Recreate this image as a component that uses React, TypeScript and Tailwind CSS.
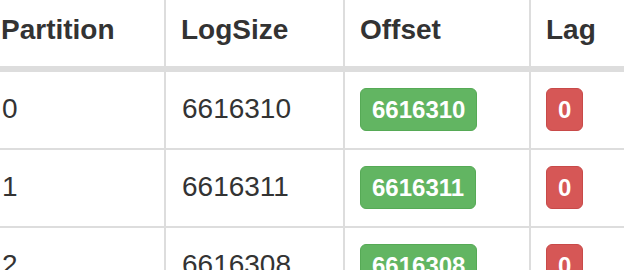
const rows = [
  { partition: 0, logSize: 6616310, offset: 6616310, lag: 0 },
  { partition: 1, logSize: 6616311, offset: 6616311, lag: 0 },
  { partition: 2, logSize: 6616308, offset: 6616308, lag: 0 },
]

const Badge = ({ value, tone }: { value: number; tone: "green" | "red" }) => (
  <span
    className={
      tone === "green"
        ? "inline-block rounded-[6px] border border-[#56aa56] bg-[#62b562] px-[11px] py-[4px] text-[24px] font-bold leading-[33px] text-white"
        : "inline-block rounded-[6px] border border-[#c84a49] bg-[#d65756] px-[11px] py-[4px] text-[24px] font-bold leading-[33px] text-white"
    }
  >
    {value}
  </span>
)

export default function App() {
  return (
    <div
      className="h-[270px] w-[624px] overflow-hidden bg-white text-[28px] leading-[40px] text-[#333]"
      style={{ fontFamily: '"Liberation Sans", Arial, sans-serif' }}
    >
      <div className="flex h-[72px] border-b-[6px] border-[#ddd] font-bold">
        <div className="w-[166px] shrink-0 border-r-2 border-[#ddd] pl-[1px] pt-[10px]">Partition</div>
        <div className="w-[179px] shrink-0 border-r-2 border-[#ddd] pl-[15px] pt-[10px]">LogSize</div>
        <div className="w-[186px] shrink-0 border-r-2 border-[#ddd] pl-[15px] pt-[10px]">Offset</div>
        <div className="w-[120px] shrink-0 pl-[15px] pt-[10px]">Lag</div>
      </div>
      {rows.map((r) => (
        <div key={r.partition} className="flex h-[78px] border-b-2 border-[#ddd]">
          <div className="w-[166px] shrink-0 border-r-2 border-[#ddd] pl-[2px] pt-[17px]">{r.partition}</div>
          <div className="w-[179px] shrink-0 border-r-2 border-[#ddd] pl-[16px] pt-[17px]">{r.logSize}</div>
          <div className="w-[186px] shrink-0 border-r-2 border-[#ddd] pl-[15px] pt-[16px]">
            <Badge value={r.offset} tone="green" />
          </div>
          <div className="w-[120px] shrink-0 pl-[15px] pt-[16px]">
            <Badge value={r.lag} tone="red" />
          </div>
        </div>
      ))}
    </div>
  )
}
